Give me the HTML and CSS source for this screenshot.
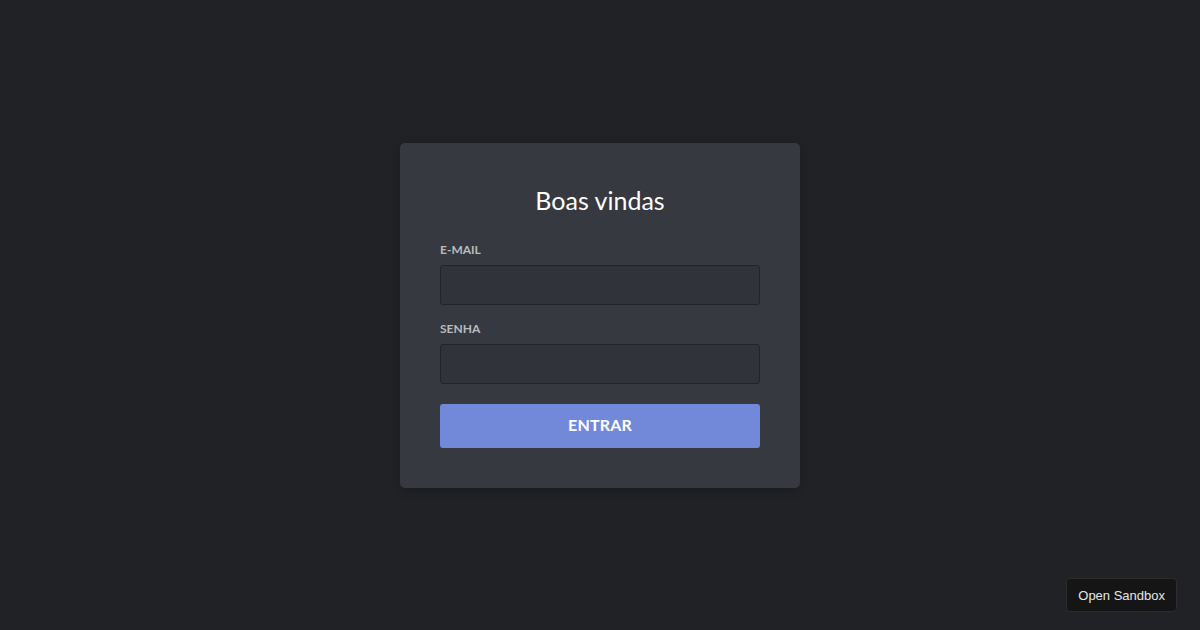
FILE: index.html
```html
<!DOCTYPE html>
<html lang="pt-BR">
<head>
<meta charset="utf-8">
<title>Login</title>
<link rel="stylesheet" href="styles.css">
</head>
<body>
<main class="page">
  <form class="card">
    <h1 class="title">Boas vindas</h1>
    <label class="label" for="email">E-mail</label>
    <input class="input" id="email" type="email">
    <label class="label label-gap" for="senha">Senha</label>
    <input class="input" id="senha" type="password">
    <button class="submit" type="button">Entrar</button>
  </form>
</main>
<button class="sandbox" type="button">Open Sandbox</button>
</body>
</html>
```
FILE: styles.css
```css
html, body {
  margin: 0;
  height: 100%;
}
body {
  background: #202225;
  font-family: Lato, "Noto Sans", sans-serif;
}
.page {
  height: 630px;
  display: flex;
  align-items: flex-start;
  justify-content: center;
}
.card {
  margin-top: 143px;
  width: 320px;
  padding: 40px;
  background: #36393f;
  border-radius: 5px;
  box-shadow: 0 2px 10px rgba(0, 0, 0, 0.2);
  display: flex;
  flex-direction: column;
}
.title {
  margin: 2px 0 27px;
  font-size: 25px;
  line-height: 30px;
  font-weight: 400;
  color: #ffffff;
  text-align: center;
}
.label {
  display: block;
  font-size: 12px;
  line-height: 16px;
  font-weight: 700;
  color: #b9bbbe;
  text-transform: uppercase;
  margin-bottom: 7px;
}
.label-gap {
  margin-top: 16px;
}
.input {
  box-sizing: border-box;
  width: 100%;
  height: 40px;
  margin: 0;
  background: #303339;
  border: 1px solid #222427;
  border-radius: 3px;
  padding: 0 10px;
  color: #dcddde;
  font-family: inherit;
  font-size: 16px;
  outline: none;
}
.submit {
  margin-top: 20px;
  height: 44px;
  padding: 0 0 3px;
  border: 0;
  border-radius: 3px;
  background: #7289da;
  color: #ffffff;
  font-family: inherit;
  font-size: 16px;
  font-weight: 700;
  text-transform: uppercase;
  letter-spacing: 0.2px;
  cursor: pointer;
}
.sandbox {
  position: fixed;
  right: 23px;
  bottom: 18px;
  height: 34px;
  padding: 0 11px;
  background: #151515;
  border: 1px solid #2c2c2c;
  border-radius: 4px;
  color: #e6e6e6;
  font-family: "Liberation Sans", Arial, sans-serif;
  font-size: 13px;
}
```
